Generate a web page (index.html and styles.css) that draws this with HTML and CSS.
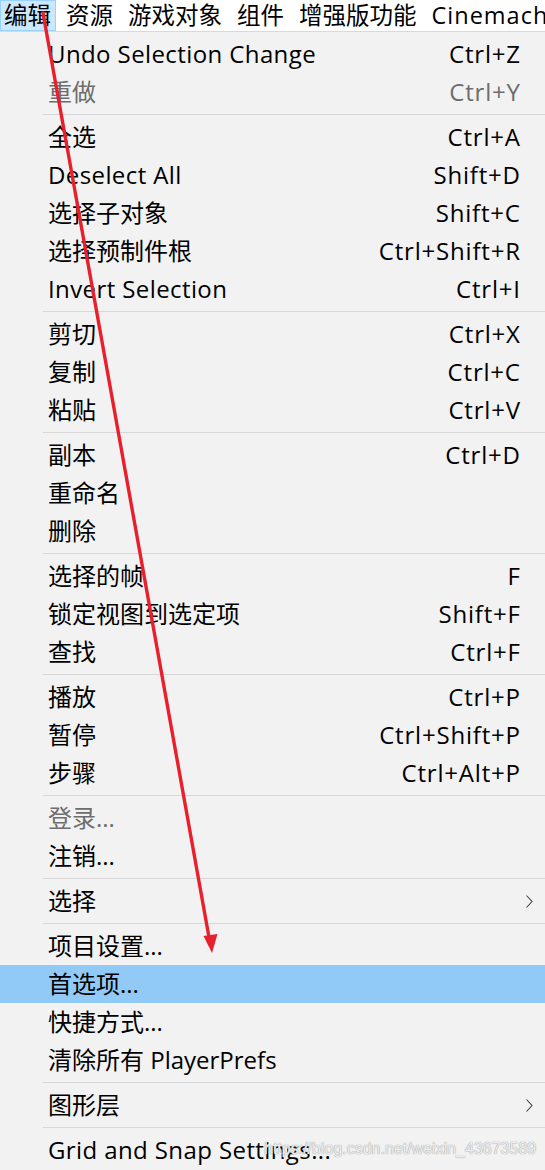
FILE: index.html
```html
<!DOCTYPE html>
<html lang="zh-CN">
<head>
<meta charset="utf-8">
<title>编辑菜单</title>
<link rel="stylesheet" href="styles.css">
</head>
<body>
<div class="page">
  <div class="menubar">
    <div class="bar-item active">编辑</div>
    <div class="bar-item">资源</div>
    <div class="bar-item">游戏对象</div>
    <div class="bar-item">组件</div>
    <div class="bar-item">增强版功能</div>
    <div class="bar-item lat">Cinemachine</div>
  </div>
  <div class="menu">
    <div class="row"><span class="label lat">Undo Selection Change</span><span class="key">Ctrl+Z</span><span class="sub"></span></div>
    <div class="row dis"><span class="label">重做</span><span class="key">Ctrl+Y</span><span class="sub"></span></div>
    <div class="sep"></div>
    <div class="row"><span class="label">全选</span><span class="key">Ctrl+A</span><span class="sub"></span></div>
    <div class="row"><span class="label lat">Deselect All</span><span class="key">Shift+D</span><span class="sub"></span></div>
    <div class="row"><span class="label">选择子对象</span><span class="key">Shift+C</span><span class="sub"></span></div>
    <div class="row"><span class="label">选择预制件根</span><span class="key">Ctrl+Shift+R</span><span class="sub"></span></div>
    <div class="row"><span class="label lat">Invert Selection</span><span class="key">Ctrl+I</span><span class="sub"></span></div>
    <div class="sep"></div>
    <div class="row"><span class="label">剪切</span><span class="key">Ctrl+X</span><span class="sub"></span></div>
    <div class="row"><span class="label">复制</span><span class="key">Ctrl+C</span><span class="sub"></span></div>
    <div class="row"><span class="label">粘贴</span><span class="key">Ctrl+V</span><span class="sub"></span></div>
    <div class="sep"></div>
    <div class="row"><span class="label">副本</span><span class="key">Ctrl+D</span><span class="sub"></span></div>
    <div class="row"><span class="label">重命名</span><span class="key"></span><span class="sub"></span></div>
    <div class="row"><span class="label">删除</span><span class="key"></span><span class="sub"></span></div>
    <div class="sep"></div>
    <div class="row"><span class="label">选择的帧</span><span class="key">F</span><span class="sub"></span></div>
    <div class="row"><span class="label">锁定视图到选定项</span><span class="key">Shift+F</span><span class="sub"></span></div>
    <div class="row"><span class="label">查找</span><span class="key">Ctrl+F</span><span class="sub"></span></div>
    <div class="sep"></div>
    <div class="row"><span class="label">播放</span><span class="key">Ctrl+P</span><span class="sub"></span></div>
    <div class="row"><span class="label">暂停</span><span class="key">Ctrl+Shift+P</span><span class="sub"></span></div>
    <div class="row"><span class="label">步骤</span><span class="key">Ctrl+Alt+P</span><span class="sub"></span></div>
    <div class="sep"></div>
    <div class="row dis"><span class="label">登录...</span><span class="key"></span><span class="sub"></span></div>
    <div class="row"><span class="label">注销...</span><span class="key"></span><span class="sub"></span></div>
    <div class="sep"></div>
    <div class="row"><span class="label">选择</span><span class="key"></span><span class="sub"><svg class="chev" width="7" height="13" viewBox="0 0 7 13"><polyline points="0.5,0.5 6,6.5 0.5,12.5" fill="none" stroke="#404040" stroke-width="1.1"/></svg></span></div>
    <div class="sep"></div>
    <div class="row"><span class="label">项目设置...</span><span class="key"></span><span class="sub"></span></div>
    <div class="row sel"><span class="label">首选项...</span><span class="key"></span><span class="sub"></span></div>
    <div class="row"><span class="label">快捷方式...</span><span class="key"></span><span class="sub"></span></div>
    <div class="row"><span class="label">清除所有 PlayerPrefs</span><span class="key"></span><span class="sub"></span></div>
    <div class="sep"></div>
    <div class="row"><span class="label">图形层</span><span class="key"></span><span class="sub"><svg class="chev" width="7" height="13" viewBox="0 0 7 13"><polyline points="0.5,0.5 6,6.5 0.5,12.5" fill="none" stroke="#404040" stroke-width="1.1"/></svg></span></div>
    <div class="sep"></div>
    <div class="row"><span class="label lat">Grid and Snap Settings...</span><span class="key"></span><span class="sub"></span></div>
  </div>
  <svg class="annot" width="545" height="1170" viewBox="0 0 545 1170">
    <line x1="43" y1="13" x2="209.5" y2="940" stroke="#e8202c" stroke-width="3.4" stroke-linecap="round"/>
    <polygon points="203.5,936 217.5,934 212,953" fill="#e8202c"/>
  </svg>
  <div class="watermark">https://blog.csdn.net/weixin_43673589</div>
</div>
</body>
</html>
```

FILE: styles.css
```css
html, body {
  margin: 0;
  padding: 0;
  background: #f2f2f2;
}

.page {
  position: relative;
  width: 545px;
  height: 1170px;
  overflow: hidden;
  font-family: "Open Sans", "Noto Sans CJK SC", sans-serif;
  color: #000;
}

.menubar {
  display: flex;
  height: 31px;
  background: #ffffff;
  border-bottom: 1px solid #d9d9d9;
  font-size: 23.5px;
  line-height: 31px;
  white-space: nowrap;
}

.bar-item {
  flex: none;
  padding: 0 5px 0 4px;
  margin-right: 6px;
}

.bar-item.lat {
  letter-spacing: 1px;
}

.bar-item.active {
  background: #cce8ff;
  box-shadow: inset 0 0 0 1px #99d1ff;
}

.menu {
  padding-top: 3px;
  font-size: 24px;
}

.row {
  display: flex;
  align-items: center;
  height: 38px;
  padding: 0 12px 0 48px;
  line-height: 38px;
  white-space: nowrap;
}

.row.dis {
  color: #6d6d6d;
}

.row.sel {
  background: #91c9f7;
}

.label {
  flex: 1;
}

.label.lat {
  letter-spacing: 0.4px;
}

.key {
  flex: none;
  letter-spacing: 0.8px;
  margin-right: -0.8px;
}

.sub {
  flex: none;
  width: 13px;
  height: 38px;
  display: flex;
  align-items: center;
  justify-content: flex-end;
}

.sep {
  height: 1px;
  background: #d7d7d7;
  margin: 3px 0 3px 43px;
}

.annot {
  position: absolute;
  left: 0;
  top: 0;
  pointer-events: none;
}

.watermark {
  position: absolute;
  left: 264px;
  top: 1139px;
  font-family: "Liberation Sans", Arial, sans-serif;
  font-size: 16px;
  line-height: 20px;
  color: #eeeeee;
  text-shadow: 0 0 1px #9a9a9a, 0 0 1px #b0b0b0;
  white-space: nowrap;
}
```
